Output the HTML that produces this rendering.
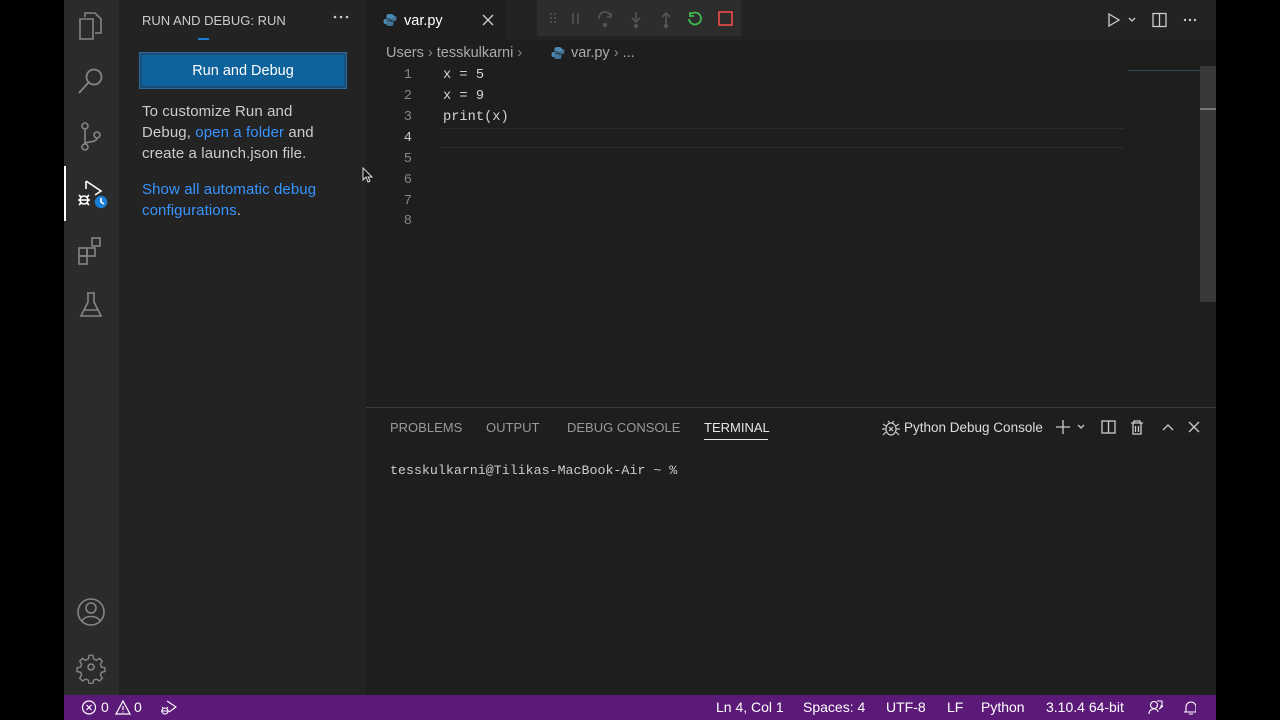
<!DOCTYPE html>
<html><head><meta charset="utf-8"><style>
*{margin:0;padding:0;box-sizing:border-box}
body{width:1280px;height:720px;background:#000;position:relative;overflow:hidden;font-family:"Liberation Sans",sans-serif;color:#ccc}
.abs{position:absolute}
#act{left:64px;top:0;width:55px;height:695px;background:#2b2b2b}
#side{left:119px;top:0;width:247px;height:695px;background:#232323}
#ed{left:366px;top:0;width:850px;height:695px;background:#1e1e1e}
#tabs{left:366px;top:0;width:850px;height:40px;background:#232323}
#tab{left:366px;top:0;width:140px;height:40px;background:#1e1e1e}
#status{left:64px;top:695px;width:1152px;height:25px;background:#5c1a78;color:#fff;font-size:14px}
.mono{font-family:"Liberation Mono",monospace}
.ln{position:absolute;left:380px;width:32px;text-align:right;font-size:13.7px;color:#858585}
.code{position:absolute;left:443px;font-size:13.7px;color:#d4d4d4}
.link{color:#3794ff}
svg{position:absolute}
.st{position:absolute;left:142px;font-size:15px;line-height:21px;color:#ccc;white-space:nowrap;letter-spacing:0.1px}
</style></head><body>
<div id="act" class="abs"></div>
<div class="abs" style="left:64px;top:166px;width:2px;height:55px;background:#fff"></div>
<div id="side" class="abs"></div>
<div id="ed" class="abs"></div>
<div id="tabs" class="abs"></div>
<div id="tab" class="abs"></div>

<svg style="left:76px;top:10px" width="30" height="32" viewBox="0 0 30 32" fill="none" stroke="#858585" stroke-width="1.6"><path d="M9 7V3h10l6 6v14h-6"/><path d="M4 9h13v20H4z"/></svg>
<svg style="left:76px;top:66px" width="30" height="32" viewBox="0 0 30 32" fill="none" stroke="#858585" stroke-width="1.8"><circle cx="18" cy="11" r="7.5"/><path d="M12.5 16.5L3 27"/></svg>
<svg style="left:76px;top:120px" width="30" height="34" viewBox="0 0 30 34" fill="none" stroke="#858585" stroke-width="1.6"><circle cx="9" cy="6" r="3"/><circle cx="9" cy="27" r="3"/><circle cx="21" cy="15" r="3"/><path d="M9 9v15M21 18c0 5-12 3-12 6"/></svg>
<svg style="left:76px;top:178px" width="36" height="34" viewBox="0 0 36 34" fill="none" stroke="#fff" stroke-width="1.6"><path d="M10 3l15 10-6 4"/><path d="M10 3v8"/><circle cx="8" cy="22" r="4"/><path d="M2 22h12M3 17l2 2M13 17l-2 2M3 27l2-2M13 27l-2-2"/><circle cx="25" cy="24" r="7" fill="#1a7fd4" stroke="#2b2b2b" stroke-width="1.5"/><path d="M25 20v4l3 2" stroke="#fff"/></svg>
<svg style="left:76px;top:234px" width="30" height="32" viewBox="0 0 30 32" fill="none" stroke="#858585" stroke-width="1.6"><rect x="3" y="14" width="8" height="8"/><rect x="11" y="14" width="8" height="8"/><rect x="3" y="22" width="8" height="8"/><rect x="16" y="4" width="8" height="8"/></svg>
<svg style="left:76px;top:290px" width="30" height="32" viewBox="0 0 30 32" fill="none" stroke="#858585" stroke-width="1.6"><path d="M11 3h8M12 3v9L5 26h20L18 12V3M8 20h14"/></svg>
<svg style="left:76px;top:596px" width="30" height="32" viewBox="0 0 30 32" fill="none" stroke="#858585" stroke-width="1.6"><circle cx="15" cy="16" r="13"/><circle cx="15" cy="12" r="5"/><path d="M6 25c3-6 15-6 18 0"/></svg>
<svg style="left:76px;top:652px" width="30" height="32" viewBox="0 0 30 32" fill="none" stroke="#858585" stroke-width="1.6"><circle cx="15" cy="15" r="3"/><path d="M13 2h4l1 4 3 1.5 3.5-2 3 3-2 3.5 1 3 4 1v4l-4 1-1 3 2 3.5-3 3-3.5-2-3 1-1 4h-4l-1-4-3-1-3.5 2-3-3 2-3.5-1-3-4-1v-4l4-1 1-3-2-3.5 3-3 3.5 2 3-1.5z" transform="translate(1.5 1.5) scale(.9)"/></svg>

<div class="abs" style="left:142px;top:13px;font-size:13px;color:#ccc">RUN AND DEBUG: RUN</div>
<svg style="left:332px;top:14px" width="18" height="6" viewBox="0 0 18 6" fill="#ccc"><circle cx="3" cy="3" r="1.3"/><circle cx="9" cy="3" r="1.3"/><circle cx="15" cy="3" r="1.3"/></svg>
<div class="abs" style="left:198px;top:38px;width:11px;height:2px;background:#1a7fd4"></div>
<div class="abs" style="left:140px;top:53px;width:206px;height:35px;background:#0e639c;border:2px solid #1c4f77;outline:1px solid #2a6a9c;color:#fff;font-size:14.5px;text-align:center;line-height:33px">Run and Debug</div>
<div class="st" style="top:101px">To customize Run and</div>
<div class="st" style="top:122px">Debug, <span class="link">open a folder</span> and</div>
<div class="st" style="top:143px">create a launch.json file.</div>
<div class="st" style="top:179px"><span class="link">Show all automatic debug</span></div>
<div class="st" style="top:200px"><span class="link">configurations</span>.</div>
<svg style="left:362px;top:167px" width="12" height="16" viewBox="0 0 12 16"><path d="M1 1v12l3-3 2 5 2-1-2-4h4z" fill="#111" stroke="#ddd" stroke-width="1"/></svg>

<svg style="left:383px;top:13px" width="14" height="14" viewBox="0 0 14 14"><path d="M7 1C3 1 3.5 2.5 3.5 4v1.5H7V6H2c-2 0-2 5 0 5h1.5V9c0-1.5 1-2.5 2.5-2.5h3c1 0 2-1 2-2V3c0-1-1-2-4-2z" fill="#4a8ab5"/><path d="M7 13c4 0 3.5-1.5 3.5-3V8.5H7V8h5c2 0 2-5 0-5h-1.5v2c0 1.5-1 2.5-2.5 2.5h-3c-1 0-2 1-2 2V11c0 1 1 2 4 2z" fill="#4a8ab5" opacity=".8"/></svg>
<div class="abs" style="left:404px;top:13px;font-size:14.5px;color:#fff">var.py</div>
<svg style="left:482px;top:14px" width="12" height="12" viewBox="0 0 12 12" stroke="#ccc" stroke-width="1.4"><path d="M1 1l10 10M11 1L1 11"/></svg>

<div class="abs" style="left:537px;top:0;width:204px;height:36px;background:#2d2d2d"></div>
<svg style="left:545px;top:9px" width="200" height="20" viewBox="0 0 200 20" fill="none" stroke="#555" stroke-width="1.6">
<g fill="#555" stroke="none"><circle cx="6" cy="5" r="1"/><circle cx="10" cy="5" r="1"/><circle cx="6" cy="9" r="1"/><circle cx="10" cy="9" r="1"/><circle cx="6" cy="13" r="1"/><circle cx="10" cy="13" r="1"/></g>
<path d="M28 4v11M33 4v11"/>
<path d="M54 10a6 6 0 0 1 12-2M66 4v4h-4"/><circle cx="60" cy="16" r="1.3" fill="#555"/>
<path d="M91 3v10M87 9l4 4 4-4"/><circle cx="91" cy="17" r="1.3" fill="#555"/>
<path d="M121 15V5M117 8l4-4 4 4"/><circle cx="121" cy="17" r="1.3" fill="#555"/>
<path d="M146 5a6 6 0 1 1-2 5M145 3v4h4" stroke="#3fb950" stroke-width="1.8"/>
<rect x="174" y="3" width="13" height="13" stroke="#f14c4c" stroke-width="1.6"/>
</svg>

<svg style="left:1106px;top:12px" width="100" height="16" viewBox="0 0 100 16" fill="none" stroke="#ccc" stroke-width="1.3"><path d="M3 2l10 6-10 6z"/><path d="M23 6l3 3 3-3"/><rect x="47" y="1.5" width="13" height="13"/><path d="M53.5 1.5v13"/><g fill="#ccc" stroke="none"><circle cx="79" cy="8" r="1.2"/><circle cx="84" cy="8" r="1.2"/><circle cx="89" cy="8" r="1.2"/></g></svg>

<div class="abs" style="left:386px;top:45px;font-size:14.5px;color:#aaa;white-space:nowrap">Users <span style="color:#888">›</span> tesskulkarni <span style="color:#888">›</span></div>
<div class="abs" style="left:571px;top:45px;font-size:14.5px;color:#aaa;white-space:nowrap">var.py <span style="color:#888">›</span> ...</div>
<svg style="left:551px;top:46px" width="14" height="14" viewBox="0 0 14 14"><path d="M7 1C3 1 3.5 2.5 3.5 4v1.5H7V6H2c-2 0-2 5 0 5h1.5V9c0-1.5 1-2.5 2.5-2.5h3c1 0 2-1 2-2V3c0-1-1-2-4-2z" fill="#4a8ab5"/><path d="M7 13c4 0 3.5-1.5 3.5-3V8.5H7V8h5c2 0 2-5 0-5h-1.5v2c0 1.5-1 2.5-2.5 2.5h-3c-1 0-2 1-2 2V11c0 1 1 2 4 2z" fill="#4a8ab5" opacity=".8"/></svg>

<div class="abs" style="left:440px;top:128px;width:684px;height:20px;border-top:1px solid #2a2a2a;border-bottom:1px solid #2a2a2a"></div>
<div class="ln mono" style="top:68px">1</div><div class="code mono" style="top:68px">x = 5</div>
<div class="ln mono" style="top:89px">2</div><div class="code mono" style="top:89px">x = 9</div>
<div class="ln mono" style="top:110px">3</div><div class="code mono" style="top:110px">print(x)</div>
<div class="ln mono" style="top:131px;color:#c6c6c6">4</div>
<div class="ln mono" style="top:152px">5</div>
<div class="ln mono" style="top:173px">6</div>
<div class="ln mono" style="top:194px">7</div>
<div class="ln mono" style="top:214px">8</div>
<div class="abs" style="left:1128px;top:70px;width:72px;height:1px;background:#3a4a55"></div>
<div class="abs" style="left:1200px;top:66px;width:16px;height:236px;background:#383838"></div>
<div class="abs" style="left:1200px;top:108px;width:16px;height:2px;background:#777"></div>

<div class="abs" style="left:366px;top:407px;width:850px;height:1px;background:#3a3a3a"></div>
<div class="abs" style="left:390px;top:420px;font-size:13px;color:#999">PROBLEMS</div>
<div class="abs" style="left:486px;top:420px;font-size:13px;color:#999">OUTPUT</div>
<div class="abs" style="left:567px;top:420px;font-size:13px;color:#999">DEBUG CONSOLE</div>
<div class="abs" style="left:704px;top:420px;font-size:13px;color:#e7e7e7">TERMINAL</div>
<div class="abs" style="left:704px;top:439px;width:64px;height:1px;background:#e7e7e7"></div>
<svg style="left:881px;top:419px" width="20" height="18" viewBox="0 0 20 18" fill="none" stroke="#ccc" stroke-width="1.2"><ellipse cx="10" cy="10" rx="5" ry="6"/><path d="M7 2l2 2M13 2l-2 2M1 10h4M15 10h4M2 5l3 2M18 5l-3 2M2 16l3-3M18 16l-3-3M8 8l4 4M12 8l-4 4"/></svg>
<div class="abs" style="left:904px;top:420px;font-size:13.5px;color:#ddd">Python Debug Console</div>
<svg style="left:1054px;top:419px" width="150" height="16" viewBox="0 0 150 16" fill="none" stroke="#ccc" stroke-width="1.3"><path d="M9 1v14M2 8h14"/><path d="M24 6l3 3 3-3"/><rect x="48" y="2" width="13" height="12"/><path d="M54.5 2v12"/><path d="M77 4h12M80 4V2h6v2M79 4v11h8V4M81.5 7v6M84.5 7v6"/><path d="M109 11l5-5 5 5"/><path d="M135 3l10 10M145 3l-10 10"/></svg>
<div class="abs mono" style="left:390px;top:463px;font-size:13.3px;color:#ccc">tesskulkarni@Tilikas-MacBook-Air ~ %</div>

<div id="status" class="abs">
<svg style="left:17px;top:4px" width="70" height="17" viewBox="0 0 70 17" fill="none" stroke="#fff" stroke-width="1.2"><circle cx="8" cy="8.5" r="6.5"/><path d="M5.5 6l5 5M10.5 6l-5 5"/><path d="M42 2l7 13H35z"/><path d="M42 7v4M42 12.5v1"/></svg>
<span class="abs" style="left:37px;top:4px">0</span>
<span class="abs" style="left:70px;top:4px">0</span>
<svg style="left:96px;top:4px" width="18" height="17" viewBox="0 0 18 17" fill="none" stroke="#fff" stroke-width="1.1"><path d="M7 2l9 6-7 5"/><circle cx="5" cy="12" r="3"/><path d="M1 12h8M2 8l1.5 1.5M8 8l-1.5 1.5"/></svg>
<span class="abs" style="left:652px;top:4px">Ln 4, Col 1</span>
<span class="abs" style="left:739px;top:4px">Spaces: 4</span>
<span class="abs" style="left:822px;top:4px">UTF-8</span>
<span class="abs" style="left:883px;top:4px">LF</span>
<span class="abs" style="left:917px;top:4px">Python</span>
<span class="abs" style="left:982px;top:4px">3.10.4 64-bit</span>
<svg style="left:1084px;top:4px" width="48" height="17" viewBox="0 0 48 17" fill="none" stroke="#fff" stroke-width="1.1"><circle cx="6" cy="6" r="3.5"/><path d="M1 15c0-4 3-5 5-5s4 1 4 3M9 2h5v5h-2M11 10l4-3"/><path d="M38 13V8a5 5 0 0 1 10 0v5zM36 13h14M41 15h4"/></svg>
</div>
</body></html>
